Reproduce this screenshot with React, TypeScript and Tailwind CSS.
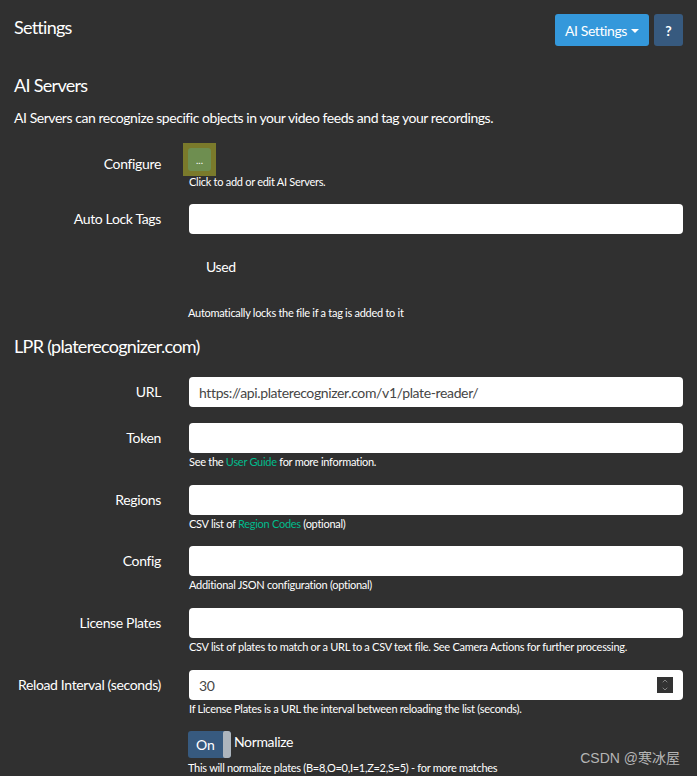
import { ChevronUp, ChevronDown } from "lucide-react";

const font = { fontFamily: "Lato, 'Noto Sans', sans-serif" };

function Label({ text }: { text: string }) {
  return (
    <div className="w-[147px] shrink-0 text-right text-[14px] leading-[30px] tracking-[-0.35px] text-white">
      {text}
    </div>
  );
}

function Help({ children }: { children: React.ReactNode }) {
  return <div className="mt-[2px] text-[11px] leading-[14px] tracking-[-0.28px] text-white">{children}</div>;
}

function TextField({
  label,
  value,
  help,
  spinner,
  className = "",
}: {
  label: string;
  value?: string;
  help?: React.ReactNode;
  spinner?: boolean;
  className?: string;
}) {
  return (
    <div className={`flex items-start ${className}`}>
      <Label text={label} />
      <div className="ml-[28px] flex-1">
        <div className="flex h-[30px] items-center rounded-[4px] bg-white pl-[10px] pr-[10px] text-[14px] tracking-[-0.37px] text-[#464646]">
          <span className="flex-1">{value}</span>
          {spinner && (
            <div className="flex h-[16px] w-[16px] flex-col items-center justify-center bg-[#333] text-[#aaa]">
              <ChevronUp size={8} strokeWidth={2} />
              <ChevronDown size={8} strokeWidth={2} />
            </div>
          )}
        </div>
        {help && <Help>{help}</Help>}
      </div>
    </div>
  );
}

export default function App() {
  return (
    <div className="relative h-[776px] w-[697px] overflow-hidden bg-[#303030] px-[14px] pt-[14px]" style={font}>
      {/* header */}
      <div className="flex h-[32px] items-start justify-between">
        <div className="text-[18px] leading-[26px] tracking-[-0.75px] text-white">Settings</div>
        <div className="flex gap-[5px]">
          <button className="flex h-[32px] w-[94px] items-center justify-center gap-[4px] rounded-[3px] bg-[#3498db] text-[14px] tracking-[-0.4px] text-white">
            AI Settings
            <span className="mt-[1px] h-0 w-0 border-x-[4px] border-t-[4px] border-x-transparent border-t-white" />
          </button>
          <button className="flex h-[32px] w-[29px] items-center justify-center rounded-[3px] bg-[#375a7f] text-[14px] font-bold text-white">
            ?
          </button>
        </div>
      </div>

      <h2 className="mt-[27px] text-[18px] leading-[24px] tracking-[-0.7px] text-white">AI Servers</h2>
      <p className="mt-[11px] text-[14px] leading-[20px] tracking-[-0.45px] text-white">
        AI Servers can recognize specific objects in your video feeds and tag your recordings.
      </p>

      {/* configure */}
      <div className="mt-[15px] flex items-start">
        <div className="w-[147px] shrink-0 pt-[11px] text-right text-[14px] leading-[20px] tracking-[-0.35px] text-white">
          Configure
        </div>
        <div className="ml-[22px] flex-1">
          <div className="inline-flex bg-[#7a7a2b] p-[5px]">
            <button className="flex h-[23px] w-[23px] items-center justify-center rounded-[3px] bg-[#6e8e50] text-[10px] leading-none text-white">
              ...
            </button>
          </div>
          <div className="ml-[6px] -mt-[1px] text-[11px] leading-[14px] tracking-[-0.28px] text-white">
            Click to add or edit AI Servers.
          </div>
        </div>
      </div>

      {/* auto lock tags */}
      <TextField label="Auto Lock Tags" className="mt-[15px]" />
      <div className="ml-[192px] mt-[23px] text-[14px] leading-[20px] tracking-[-0.35px] text-white">Used</div>
      <div className="ml-[174px] mt-[29px] text-[11px] leading-[14px] tracking-[-0.28px] text-white">
        Automatically locks the file if a tag is added to it
      </div>

      <h2 className="mt-[14px] text-[18px] leading-[24px] tracking-[-0.7px] text-white">LPR (platerecognizer.com)</h2>

      <TextField label="URL" value="https://api.platerecognizer.com/v1/plate-reader/" className="mt-[19px]" />
      <TextField
        label="Token"
        className="mt-[16px]"
        help={
          <>
            See the <span className="text-[#00bc8c]">User Guide</span> for more information.
          </>
        }
      />
      <TextField
        label="Regions"
        className="mt-[16px]"
        help={
          <>
            CSV list of <span className="text-[#00bc8c]">Region Codes</span> (optional)
          </>
        }
      />
      <TextField label="Config" className="mt-[15px]" help="Additional JSON configuration (optional)" />
      <TextField
        label="License Plates"
        className="mt-[16px]"
        help="CSV list of plates to match or a URL to a CSV text file. See Camera Actions for further processing."
      />
      <TextField
        label="Reload Interval (seconds)"
        value="30"
        spinner
        className="mt-[16px]"
        help="If License Plates is a URL the interval between reloading the list (seconds)."
      />

      {/* normalize toggle */}
      <div className="ml-[174px] mt-[15px]">
        <div className="flex items-start">
          <div className="flex h-[27px] w-[43px] items-stretch overflow-hidden rounded-[3px] bg-[#375a7f]">
            <span className="flex flex-1 items-center justify-center text-[14px] text-white">On</span>
            <span className="w-[8px] rounded-[2px] bg-[#adb5bd]" />
          </div>
          <span className="ml-[3px] text-[14px] leading-[22px] tracking-[-0.35px] text-white">Normalize</span>
        </div>
        <div className="mt-[3px] text-[11px] leading-[14px] tracking-[-0.28px] text-white">
          This will normalize plates (B=8,O=0,I=1,Z=2,S=5) - for more matches
        </div>
      </div>

      <div
        className="absolute bottom-[7px] right-[17px] text-[14px] text-[#b5b5b5]"
        style={{ fontFamily: "'Liberation Sans', 'Noto Sans CJK SC', sans-serif" }}
      >
        CSDN @寒冰屋
      </div>
    </div>
  );
}
